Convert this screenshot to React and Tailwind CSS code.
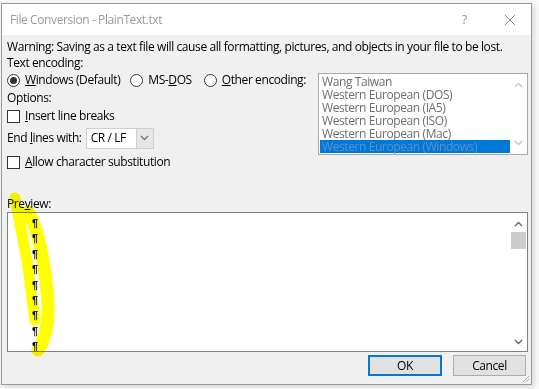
import React from "react";

const F = { fontFamily: '"Open Sans", "Noto Sans", sans-serif' };

function Radio({ checked }) {
  return (
    <span className="w-[13px] h-[13px] rounded-full border border-[#333] bg-white flex items-center justify-center shrink-0">
      {checked && <span className="w-[7px] h-[7px] rounded-full bg-[#333]" />}
    </span>
  );
}

function Check() {
  return <span className="w-[13px] h-[13px] border border-[#333] bg-white shrink-0" />;
}

function ChevUp({ color }) {
  return (
    <svg width="9" height="6" viewBox="0 0 9 6">
      <path d="M1 5 L4.5 1.5 L8 5" fill="none" stroke={color} strokeWidth="1.3" />
    </svg>
  );
}
function ChevDown({ color }) {
  return (
    <svg width="9" height="6" viewBox="0 0 9 6">
      <path d="M1 1 L4.5 4.5 L8 1" fill="none" stroke={color} strokeWidth="1.3" />
    </svg>
  );
}

export default function App() {
  const items = [
    "Wang Taiwan",
    "Western European (DOS)",
    "Western European (IA5)",
    "Western European (ISO)",
    "Western European (Mac)",
  ];
  return (
    <div className="w-[539px] h-[389px] bg-[#f9f9f9] relative overflow-hidden text-[12px] tracking-[-0.4px] text-black whitespace-nowrap" style={F}>
      <div className="absolute left-[1px] top-[3px] w-[531px] h-[382px] border border-[#9a9a9a] bg-[#f0f0f0] flex flex-col shadow-[2px_2px_6px_rgba(0,0,0,0.15)]">
        {/* title bar */}
        <div className="h-[31px] bg-white flex items-center pl-[8px] shrink-0">
          <span className="text-[#999] text-[12px]">File Conversion - PlainText.txt</span>
          <span className="ml-auto text-[#999] text-[13px] mr-[37px]">?</span>
          <svg width="12" height="12" viewBox="0 0 12 12" className="mr-[15px]">
            <path d="M1 1 L11 11 M11 1 L1 11" stroke="#888" strokeWidth="1" />
          </svg>
        </div>
        {/* body */}
        <div className="flex-1 flex flex-col pl-[5px] pr-[3px] pt-[4px]">
          <div className="h-[16px] flex items-center">
            Warning: Saving as a text file will cause all formatting, pictures, and objects in your file to be lost.
          </div>
          <div className="h-[16px] flex items-center">Text encoding:</div>
          <div className="flex">
            <div className="flex flex-col w-[311px]">
              <div className="h-[18px] flex items-center">
                <Radio checked />
                <span className="ml-[5px]"><u>W</u>indows (Default)</span>
                <span className="ml-[10px]"><Radio /></span>
                <span className="ml-[5px]">MS-<u>D</u>OS</span>
                <span className="ml-[12px]"><Radio /></span>
                <span className="ml-[5px]"><u>O</u>ther encoding:</span>
              </div>
              <div className="h-[18px] flex items-center">Options:</div>
              <div className="h-[18px] flex items-center">
                <Check />
                <span className="ml-[5px]"><u>I</u>nsert line breaks</span>
              </div>
              <div className="h-[22px] mt-[2px] flex items-center">
                <span>End <u>l</u>ines with:</span>
                <div className="ml-[4px] w-[68px] h-[21px] border border-[#cfcfcf] bg-white flex items-stretch">
                  <span className="flex-1 flex items-center pl-[4px]">CR / LF</span>
                  <span className="w-[17px] bg-[#e6e6e6] border-l border-[#cfcfcf] flex items-center justify-center">
                    <ChevDown color="#777" />
                  </span>
                </div>
              </div>
              <div className="h-[18px] mt-[4px] flex items-center">
                <Check />
                <span className="ml-[5px]"><u>A</u>llow character substitution</span>
              </div>
            </div>
            <div className="mt-[2px] w-[210px] h-[82px] border border-[#a8a8a8] bg-white flex ml-auto">
              <div className="flex-1 pl-[1px] pt-[1px] flex flex-col">
                {items.map((t) => (
                  <div key={t} className="h-[13px] leading-[13px] text-[#6d6d6d] pl-[2px]">{t}</div>
                ))}
                <div className="h-[13px] leading-[13px] bg-[#0078d7] text-[#5d8fc9] pl-[2px]">Western European (Windows)</div>
              </div>
              <div className="w-[17px] flex flex-col items-center justify-between py-[8px]">
                <ChevUp color="#c4c4c4" />
                <ChevDown color="#c4c4c4" />
              </div>
            </div>
          </div>
          <div className="h-[16px] mt-[25px] flex items-center">Pre<u>v</u>iew:</div>
          <div className="h-[140px] border border-[#828282] bg-white flex">
            <div className="flex-1 flex flex-col pl-[24px] pt-[3px] overflow-hidden">
              {Array.from({ length: 9 }).map((_, i) => (
                <div key={i} className="h-[15.4px] leading-[15.4px] font-bold text-[11px]" style={{ fontFamily: '"Liberation Sans", sans-serif' }}>¶</div>
              ))}
            </div>
            <div className="w-[17px] flex flex-col items-center pt-[8px] pb-[6px]">
              <ChevUp color="#606060" />
              <div className="mt-[5px] w-[15px] h-[17px] bg-[#cdcdcd]" />
              <div className="flex-1" />
              <ChevDown color="#606060" />
            </div>
          </div>
          <div className="flex justify-end mt-[3px] gap-[11px] pr-[2px]">
            <button className="w-[74px] h-[21px] border-2 border-[#0078d7] bg-[#e1e1e1] flex items-center justify-center">OK</button>
            <button className="w-[73px] h-[21px] border border-[#adadad] bg-[#e1e1e1] flex items-center justify-center">Cancel</button>
          </div>
        </div>
        <svg className="absolute right-[1px] bottom-[1px]" width="10" height="10" viewBox="0 0 10 10">
          <path d="M9 3 L3 9 M9 6 L6 9" stroke="#b0b0b0" strokeWidth="1" />
        </svg>
      </div>
      {/* highlighter */}
      <svg className="absolute left-0 top-0 pointer-events-none" width="539" height="389" viewBox="0 0 539 389" style={{ mixBlendMode: "multiply" }}>
        <path d="M15 198 C18 215 22 235 27 260 C30 280 32 300 35 320" fill="none" stroke="#ffff00" strokeWidth="11" strokeLinecap="round" />
        <path d="M28 212 C36 225 42 250 46 280 C50 310 48 335 38 350" fill="none" stroke="#ffff00" strokeWidth="13" strokeLinecap="round" />
      </svg>
    </div>
  );
}
